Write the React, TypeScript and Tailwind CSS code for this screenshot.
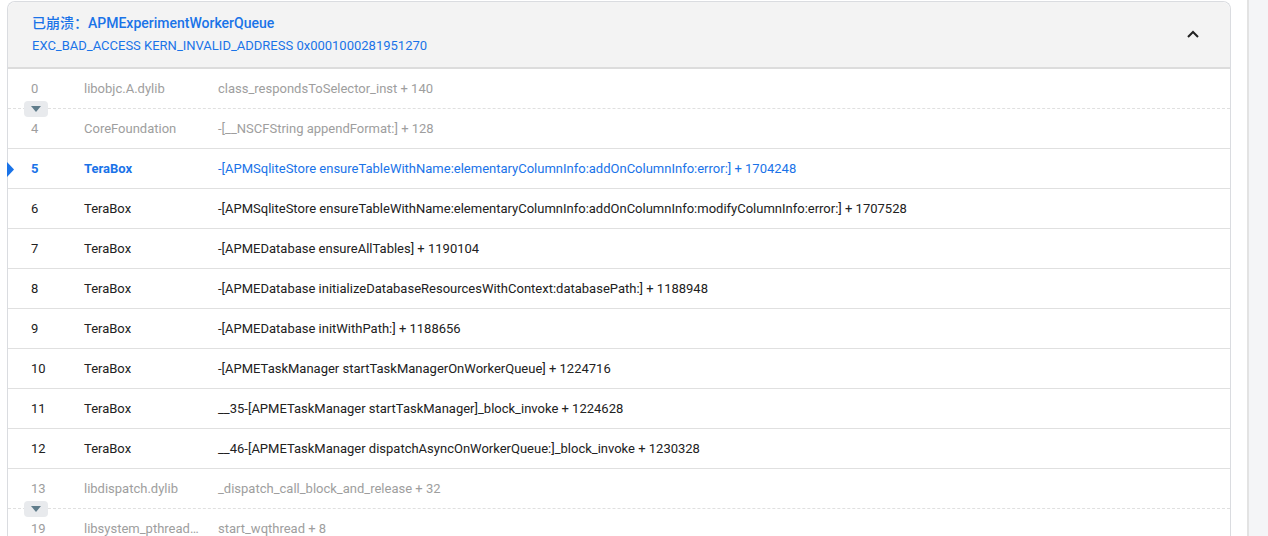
import React from 'react'

type Frame = {
  n: string
  lib: string
  sym: string
  dim?: boolean
  active?: boolean
  dashed?: boolean
}

const frames: Frame[] = [
  { n: '0', lib: 'libobjc.A.dylib', sym: 'class_respondsToSelector_inst + 140', dim: true, dashed: true },
  { n: '4', lib: 'CoreFoundation', sym: '-[__NSCFString appendFormat:] + 128', dim: true },
  { n: '5', lib: 'TeraBox', sym: '-[APMSqliteStore ensureTableWithName:elementaryColumnInfo:addOnColumnInfo:error:] + 1704248', active: true },
  { n: '6', lib: 'TeraBox', sym: '-[APMSqliteStore ensureTableWithName:elementaryColumnInfo:addOnColumnInfo:modifyColumnInfo:error:] + 1707528' },
  { n: '7', lib: 'TeraBox', sym: '-[APMEDatabase ensureAllTables] + 1190104' },
  { n: '8', lib: 'TeraBox', sym: '-[APMEDatabase initializeDatabaseResourcesWithContext:databasePath:] + 1188948' },
  { n: '9', lib: 'TeraBox', sym: '-[APMEDatabase initWithPath:] + 1188656' },
  { n: '10', lib: 'TeraBox', sym: '-[APMETaskManager startTaskManagerOnWorkerQueue] + 1224716' },
  { n: '11', lib: 'TeraBox', sym: '__35-[APMETaskManager startTaskManager]_block_invoke + 1224628' },
  { n: '12', lib: 'TeraBox', sym: '__46-[APMETaskManager dispatchAsyncOnWorkerQueue:]_block_invoke + 1230328' },
  { n: '13', lib: 'libdispatch.dylib', sym: '_dispatch_call_block_and_release + 32', dim: true, dashed: true },
  { n: '19', lib: 'libsystem_pthread.dylib', sym: 'start_wqthread + 8', dim: true },
]

function FrameRow({ f }: { f: Frame }) {
  const color = f.active ? 'text-[#1a73e8]' : f.dim ? 'text-[#9e9e9e]' : 'text-[#212121]'
  return (
    <div
      className={`relative flex items-center h-10 shrink-0 border-b border-[#e0e0e0] ${f.dashed ? 'border-dashed' : ''} ${color}`}
    >
      {f.active && (
        <svg className="absolute left-[-1px] top-[13px]" width="8" height="15" viewBox="0 0 8 15">
          <path d="M0 0 L7 7.5 L0 15 Z" fill="#1a73e8" />
        </svg>
      )}
      <div className={`w-[53px] shrink-0 pl-[23px] ${f.active ? 'font-bold' : ''}`}>{f.n}</div>
      <div className={`w-[139px] shrink-0 pl-[23px] truncate ${f.active ? 'font-bold' : ''}`}>{f.lib}</div>
      <div className="flex-1 pl-[18px] whitespace-nowrap">{f.sym}</div>
      {f.dashed && (
        <div className="absolute left-[16px] bottom-[-9px] z-10 w-6 h-[16px] rounded bg-[#e8eaed] flex items-center justify-center">
          <svg width="10" height="6" viewBox="0 0 10 6">
            <path d="M0 0 L10 0 L5 6 Z" fill="#607d8b" />
          </svg>
        </div>
      )}
    </div>
  )
}

export default function App() {
  return (
    <div
      className="flex h-[536px] w-[1268px] bg-white overflow-hidden text-[13px]"
      style={{ fontFamily: 'Roboto, "Noto Sans CJK SC", sans-serif' }}
    >
      <div className="w-[7px] shrink-0" />

      {/* crash card */}
      <div className="w-[1224px] shrink-0 flex flex-col border border-b-0 border-[#dadce0] rounded-t-lg mt-px">
        <div className="h-[67px] shrink-0 flex items-center justify-between bg-[#f3f3f3] border-b-2 border-[#dcdcdc] rounded-t-lg pl-[24px] pr-[30px]">
          <div className="flex flex-col text-[#1a73e8] -mt-[2px]">
            <div className="text-[14px] font-medium leading-5">已崩溃：APMExperimentWorkerQueue</div>
            <div className="text-[13px] leading-4 mt-[5px]">EXC_BAD_ACCESS KERN_INVALID_ADDRESS 0x0001000281951270</div>
          </div>
          <svg width="14" height="10" viewBox="0 0 14 10" className="-mt-[1px]">
            <path d="M2 8 L7 3 L12 8" stroke="#212121" strokeWidth="2" fill="none" />
          </svg>
        </div>

        <div className="flex flex-col">
          {frames.map((f) => (
            <FrameRow key={f.n} f={f} />
          ))}
        </div>
      </div>

      <div className="w-[16px] shrink-0" />
      <div className="flex-1 border-l-2 border-[#e3e3e3] bg-[#f4f5f7]" />
    </div>
  )
}
